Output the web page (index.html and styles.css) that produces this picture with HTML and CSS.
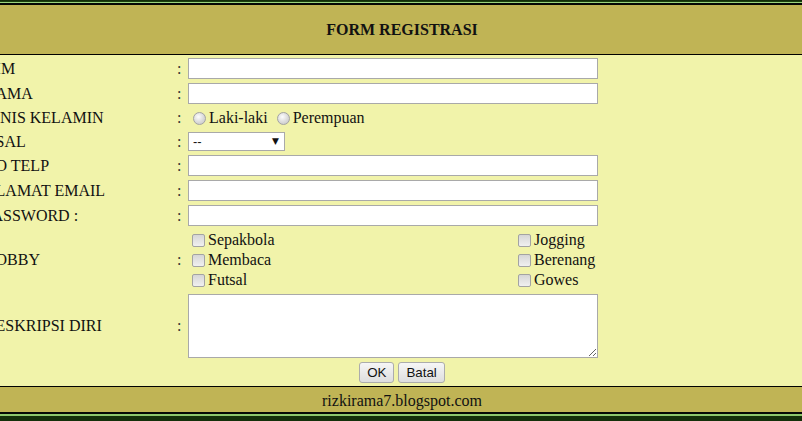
FILE: index.html
```html
<!DOCTYPE html>
<html>
  <head>
    <title>Form Registrasi</title>
    <meta charset="utf-8" />
    <link rel="stylesheet" href="styles.css">
  </head>
  <body>
    <div class="page">
      <div class="rule rule-top"></div>
      <h1 class="title">FORM REGISTRASI</h1>
      <form class="reg-form">
        <label class="lbl" for="nim">NIM</label>
        <span class="sep">:</span>
        <div class="field"><input type="text" id="nim" class="text-in" /></div>

        <label class="lbl" for="nama">NAMA</label>
        <span class="sep">:</span>
        <div class="field"><input type="text" id="nama" class="text-in" /></div>

        <span class="lbl">JENIS KELAMIN</span>
        <span class="sep">:</span>
        <div class="field choices">
          <label class="opt"><input type="radio" name="jk" value="L" />Laki-laki</label>
          <label class="opt"><input type="radio" name="jk" value="P" />Perempuan</label>
        </div>

        <label class="lbl" for="asal">ASAL</label>
        <span class="sep">:</span>
        <div class="field">
          <span class="select-wrap">
            <select id="asal">
              <option>--</option>
              <option>Jakarta</option>
              <option>Bandung</option>
              <option>Surabaya</option>
            </select>
          </span>
        </div>

        <label class="lbl" for="telp">NO TELP</label>
        <span class="sep">:</span>
        <div class="field"><input type="text" id="telp" class="text-in" /></div>

        <label class="lbl" for="email">ALAMAT EMAIL</label>
        <span class="sep">:</span>
        <div class="field"><input type="text" id="email" class="text-in" /></div>

        <label class="lbl" for="pass">PASSWORD :</label>
        <span class="sep">:</span>
        <div class="field"><input type="password" id="pass" class="text-in" /></div>

        <span class="lbl">HOBBY</span>
        <span class="sep">:</span>
        <div class="field hobby">
          <label class="opt"><input type="checkbox" />Sepakbola</label>
          <label class="opt"><input type="checkbox" />Jogging</label>
          <label class="opt"><input type="checkbox" />Membaca</label>
          <label class="opt"><input type="checkbox" />Berenang</label>
          <label class="opt"><input type="checkbox" />Futsal</label>
          <label class="opt"><input type="checkbox" />Gowes</label>
        </div>

        <label class="lbl" for="desk">DESKRIPSI DIRI</label>
        <span class="sep">:</span>
        <div class="field"><textarea id="desk"></textarea></div>

        <div class="actions">
          <button type="submit" onclick="event.preventDefault()">OK</button>
          <button type="reset">Batal</button>
        </div>
      </form>
      <div class="footer">rizkirama7.blogspot.com</div>
      <div class="rule rule-bottom"></div>
    </div>
  </body>
</html>
```

FILE: styles.css
```css
html {
  overflow: hidden;
}
body {
  margin: 0;
  background-color: #f1f3aa;
  font-family: "Liberation Serif", "Times New Roman", serif;
  font-size: 16px;
  color: #111;
}
.page {
  width: 836px;
  margin-left: -16px;
}
.rule {
  height: 5px;
}
.rule-top {
  background: linear-gradient(to bottom, #0f2207 0, #1d4a10 2px, #9cd47e 2px, #9cd47e 3px, #050805 3px);
}
.rule-bottom {
  height: 9px;
  background: linear-gradient(to bottom, #050805 0, #050805 2px, #8cc76c 2px, #8cc76c 4px, #14300a 4px);
}
.title {
  margin: 0;
  height: 49px;
  display: flex;
  align-items: center;
  justify-content: center;
  font-size: 16px;
  font-weight: bold;
  background-color: #c0b455;
  border-bottom: 1px solid #000;
}
.reg-form {
  display: grid;
  grid-template-columns: 190px 14px 1fr;
  row-gap: 4px;
  align-items: center;
  padding: 3px 0;
}
.sep {
  padding-left: 3px;
  color: #333;
}
.field {
  display: flex;
  align-items: center;
}
.text-in,
textarea {
  box-sizing: border-box;
  width: 410px;
  height: 21px;
  margin: 0;
  padding: 1px 2px;
  border: 1px solid #a9a9a9;
  background: #fff;
  font-family: "Liberation Sans", Arial, sans-serif;
  font-size: 13px;
}
textarea {
  height: 64px;
}
.choices {
  height: 20px;
}
.opt {
  display: flex;
  align-items: center;
  height: 20px;
  white-space: nowrap;
}
.choices .opt {
  margin-right: 4px;
}
input[type="radio"],
input[type="checkbox"] {
  appearance: none;
  box-sizing: border-box;
  width: 13px;
  height: 13px;
  border: 1px solid #a3a3a3;
}
input[type="radio"] {
  margin: 0 3px 0 5px;
  border-radius: 50%;
  background: radial-gradient(circle at 40% 35%, #fdfdfd 0, #dadada 55%, #c4c4c4 100%);
}
input[type="checkbox"] {
  margin: 0 3px 0 4px;
  border-radius: 2px;
  background: linear-gradient(to bottom, #d6d6d6, #f0f0f0);
}
.hobby {
  display: grid;
  grid-template-columns: 326px 1fr;
}
.select-wrap {
  position: relative;
  display: inline-block;
}
.select-wrap::after {
  content: "▼";
  position: absolute;
  right: 6px;
  top: 4px;
  font-family: "DejaVu Sans", sans-serif;
  font-size: 9px;
  pointer-events: none;
}
select {
  appearance: none;
  box-sizing: border-box;
  width: 97px;
  height: 19px;
  margin: 0;
  padding: 0 4px;
  border: 1px solid #a9a9a9;
  border-radius: 0;
  background: #fff;
  color: #111;
  font-family: "Liberation Sans", Arial, sans-serif;
  font-size: 13px;
}
.actions {
  grid-column: 1 / -1;
  display: flex;
  justify-content: center;
  gap: 4px;
}
button {
  box-sizing: border-box;
  height: 21px;
  margin: 0;
  padding: 1px 7px;
  border: 1px solid #acacac;
  border-radius: 3px;
  background: linear-gradient(to bottom, #f6f6f6, #dedede);
  color: #111;
  font-family: "Liberation Sans", Arial, sans-serif;
  font-size: 13.33px;
}
.footer {
  height: 26px;
  box-sizing: border-box;
  padding-top: 2px;
  display: flex;
  align-items: center;
  justify-content: center;
  background-color: #c0b455;
  border-top: 1px solid #000;
}
```
